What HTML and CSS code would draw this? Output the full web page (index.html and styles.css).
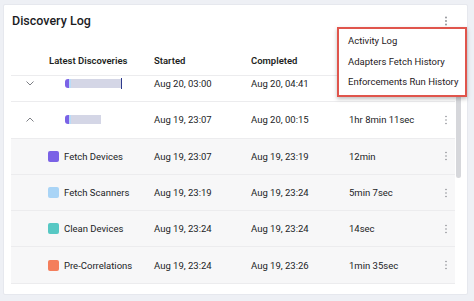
FILE: index.html
```html
<!DOCTYPE html>
<html lang="en">
<head>
  <meta charset="utf-8">
  <title>Discovery Log</title>
  <link rel="stylesheet" href="styles.css">
</head>
<body>
  <section class="card">
    <header class="card-head">
      <h1>Discovery Log</h1>
      <svg class="kebab" width="4" height="10" viewBox="0 0 4 10"><circle cx="2" cy="1.5" r="0.9"/><circle cx="2" cy="5" r="0.9"/><circle cx="2" cy="8.5" r="0.9"/></svg>
    </header>

    <div class="row head-row">
      <span></span>
      <span>Latest Discoveries</span>
      <span>Started</span>
      <span>Completed</span>
      <span></span>
      <span></span>
    </div>

    <div class="body">
      <div class="rows">
        <div class="row main first">
          <svg class="chev" width="8" height="5" viewBox="0 0 8 5"><polyline points="0.5,0.5 4,4 7.5,0.5"/></svg>
          <span class="bar"><i class="seg purple"></i><i class="seg blue"></i><i class="seg grey wide"></i><i class="caret"></i></span>
          <span>Aug 20, 03:00</span>
          <span>Aug 20, 04:41</span>
          <span></span>
          <span class="dots"></span>
        </div>
        <div class="row main">
          <svg class="chev" width="8" height="5" viewBox="0 0 8 5"><polyline points="0.5,4.5 4,1 7.5,4.5"/></svg>
          <span class="bar"><i class="seg purple"></i><i class="seg blue"></i><i class="seg grey"></i></span>
          <span>Aug 19, 23:07</span>
          <span>Aug 20, 00:15</span>
          <span>1hr 8min 11sec</span>
          <span class="dots"><svg width="4" height="10" viewBox="0 0 4 10"><circle cx="2" cy="1.5" r="0.8"/><circle cx="2" cy="5" r="0.8"/><circle cx="2" cy="8.5" r="0.8"/></svg></span>
        </div>
        <div class="row sub">
          <span></span>
          <span class="stage"><i class="swatch purple"></i>Fetch Devices</span>
          <span>Aug 19, 23:07</span>
          <span>Aug 19, 23:19</span>
          <span>12min</span>
          <span class="dots"><svg width="4" height="10" viewBox="0 0 4 10"><circle cx="2" cy="1.5" r="0.8"/><circle cx="2" cy="5" r="0.8"/><circle cx="2" cy="8.5" r="0.8"/></svg></span>
        </div>
        <div class="row sub">
          <span></span>
          <span class="stage"><i class="swatch blue"></i>Fetch Scanners</span>
          <span>Aug 19, 23:19</span>
          <span>Aug 19, 23:24</span>
          <span>5min 7sec</span>
          <span class="dots"><svg width="4" height="10" viewBox="0 0 4 10"><circle cx="2" cy="1.5" r="0.8"/><circle cx="2" cy="5" r="0.8"/><circle cx="2" cy="8.5" r="0.8"/></svg></span>
        </div>
        <div class="row sub">
          <span></span>
          <span class="stage"><i class="swatch teal"></i>Clean Devices</span>
          <span>Aug 19, 23:24</span>
          <span>Aug 19, 23:24</span>
          <span>14sec</span>
          <span class="dots"><svg width="4" height="10" viewBox="0 0 4 10"><circle cx="2" cy="1.5" r="0.8"/><circle cx="2" cy="5" r="0.8"/><circle cx="2" cy="8.5" r="0.8"/></svg></span>
        </div>
        <div class="row sub">
          <span></span>
          <span class="stage"><i class="swatch orange"></i>Pre-Correlations</span>
          <span>Aug 19, 23:24</span>
          <span>Aug 19, 23:26</span>
          <span>1min 35sec</span>
          <span class="dots"><svg width="4" height="10" viewBox="0 0 4 10"><circle cx="2" cy="1.5" r="0.8"/><circle cx="2" cy="5" r="0.8"/><circle cx="2" cy="8.5" r="0.8"/></svg></span>
        </div>
      </div>
      <div class="scroll-track"><div class="scroll-thumb"></div></div>
    </div>

    <ul class="dropdown">
      <li>Activity Log</li>
      <li>Adapters Fetch History</li>
      <li>Enforcements Run History</li>
    </ul>
  </section>
</body>
</html>
```

FILE: styles.css
```css
* {
  margin: 0;
  padding: 0;
  box-sizing: border-box;
}

body {
  width: 474px;
  height: 301px;
  padding: 4px 6px 6px 3px;
  background-color: #EEF0F5;
  color: #222326;
  font-family: "Roboto", "Liberation Sans", sans-serif;
  font-size: 9.5px;
  overflow: hidden;
}

.card {
  position: relative;
  height: 291px;
  padding: 0 5px 0 7px;
  background-color: #FFFFFF;
  border: 1px solid #E6E8EE;
  border-radius: 2px;
}

.card-head {
  display: flex;
  align-items: center;
  justify-content: space-between;
  height: 31px;
  padding: 0 14px 0 1px;
}

.card-head h1 {
  font-size: 12.5px;
  font-weight: 500;
  color: #1B1C1F;
}

.kebab {
  fill: #8A8C91;
  margin-top: 1px;
}

.row {
  display: grid;
  grid-template-columns: 38px 105px 97px 98px 88px 18px;
  align-items: center;
  height: 36.3px;
  border-bottom: 1px solid #ECECEE;
  white-space: nowrap;
}

.head-row {
  height: 40px;
  padding-top: 9px;
  font-weight: 600;
  color: #1E1F22;
  position: relative;
  z-index: 1;
  background-color: #FFFFFF;
}

.body {
  display: flex;
  height: 208px;
  overflow: hidden;
}

.rows {
  width: 446px;
}

.first {
  margin-top: -10px;
}

.sub {
  background-color: #F7F7F8;
}

.chev {
  justify-self: center;
  fill: none;
  stroke: #7D7F85;
  stroke-width: 1;
}

.bar {
  display: flex;
  align-items: center;
  height: 9px;
  padding-left: 16px;
}

.seg {
  display: block;
  height: 9px;
}

.seg.purple {
  width: 4px;
  background-color: #7A62E6;
  border-radius: 3px 0 0 3px;
}

.seg.blue {
  width: 2px;
  background-color: #B9DCF7;
}

.seg.grey {
  width: 30px;
  background-color: #D4D6E6;
}

.seg.grey.wide {
  width: 50px;
}

.caret {
  display: block;
  width: 1px;
  height: 11px;
  background-color: #2E3A8C;
}

.stage {
  display: flex;
  align-items: center;
  gap: 5px;
  margin-left: -1px;
}

.swatch {
  display: block;
  width: 11px;
  height: 11px;
  border-radius: 2px;
}

.swatch.purple { background-color: #7A62E6; }
.swatch.blue { background-color: #A9D4F6; }
.swatch.teal { background-color: #57C8C4; }
.swatch.orange { background-color: #F47E5C; }

.dots {
  display: flex;
  justify-content: center;
}

.dots svg {
  fill: #8F9196;
}

.scroll-track {
  width: 7px;
  padding: 0 1px 0 1px;
}

.scroll-thumb {
  width: 5px;
  height: 102px;
  border-radius: 3px;
  background-color: #D6D7DB;
}

.dropdown {
  position: absolute;
  left: 333px;
  top: 22px;
  width: 130px;
  height: 70px;
  padding: 2px 0 0 9px;
  list-style: none;
  background-color: #FFFFFF;
  border: 2px solid #E0554C;
  box-shadow: 0 2px 4px rgba(0, 0, 0, 0.25);
  z-index: 2;
}

.dropdown li {
  height: 20.5px;
  line-height: 20.5px;
  color: #1F2023;
}
```
